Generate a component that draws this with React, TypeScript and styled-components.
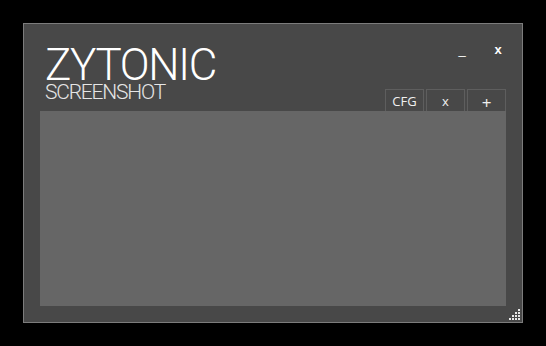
import styled, { createGlobalStyle } from 'styled-components'

const GlobalStyle = createGlobalStyle`
  html, body {
    margin: 0;
    padding: 0;
    background: #000;
  }
  body {
    font-family: Roboto, "Liberation Sans", sans-serif;
  }
`

export default function App() {
  return (
    <>
      <GlobalStyle />
      <Page>
        <Window>
          <Header>
            <Title>
              <AppName>ZYTONIC</AppName>
              <SubName>SCREENSHOT</SubName>
            </Title>
            <RightSide>
              <WindowControls>
                <ControlButton>_</ControlButton>
                <ControlButton bold>x</ControlButton>
              </WindowControls>
              <Toolbar>
                <ToolButton>CFG</ToolButton>
                <ToolButton>x</ToolButton>
                <ToolButton big>+</ToolButton>
              </Toolbar>
            </RightSide>
          </Header>
          <Canvas />
          <Grip>
            <svg width="11" height="11" viewBox="0 0 11 11">
              {[
                [9, 0],
                [6, 3], [9, 3],
                [3, 6], [6, 6], [9, 6],
                [0, 9], [3, 9], [6, 9], [9, 9],
              ].map(([x, y]) => (
                <rect key={`${x}-${y}`} x={x} y={y} width="2" height="2" fill="#e8e8e8" />
              ))}
            </svg>
          </Grip>
        </Window>
      </Page>
    </>
  )
}

const Page = styled.div`
  width: 546px;
  height: 346px;
  padding: 23px;
  box-sizing: border-box;
`

const Window = styled.div`
  position: relative;
  width: 500px;
  height: 300px;
  box-sizing: border-box;
  border: 1px solid #7c7c7c;
  background: #484848;
  padding: 0 16px 16px 16px;
  display: flex;
  flex-direction: column;
`

const Header = styled.div`
  display: flex;
  justify-content: space-between;
  align-items: flex-end;
  height: 87px;
`

const Title = styled.div`
  display: flex;
  flex-direction: column;
  padding-left: 5px;
  color: #fff;
  font-weight: 300;
  margin-bottom: 10px;
`

const AppName = styled.div`
  font-size: 44px;
  line-height: 36px;
  letter-spacing: -1.3px;
`

const SubName = styled.div`
  font-size: 21px;
  line-height: 18px;
  color: #e6e6e6;
  letter-spacing: -1.2px;
`

const RightSide = styled.div`
  display: flex;
  flex-direction: column;
  align-items: flex-end;
  justify-content: space-between;
  height: 100%;
`

const WindowControls = styled.div`
  display: flex;
  gap: 12px;
  margin-top: 19px;
  margin-right: -4px;
`

const ControlButton = styled.div<{ bold?: boolean }>`
  width: 24px;
  height: 20px;
  display: flex;
  justify-content: center;
  color: #fff;
  font-family: "Liberation Sans", sans-serif;
  font-size: 13px;
  font-weight: ${({ bold }) => (bold ? 700 : 400)};
  line-height: 14px;
`

const Toolbar = styled.div`
  display: flex;
  gap: 2px;
  margin-bottom: -1px;
`

const ToolButton = styled.div<{ big?: boolean }>`
  width: 39px;
  height: 23px;
  box-sizing: border-box;
  border: 1px solid #5e5e5e;
  border-bottom: none;
  display: flex;
  align-items: center;
  justify-content: center;
  color: #f0f0f0;
  font-family: "Open Sans", "Liberation Sans", sans-serif;
  font-size: ${({ big }) => (big ? '17px' : '13px')};
  padding-top: ${({ big }) => (big ? '2px' : '0')};
`

const Canvas = styled.div`
  flex: 1;
  background: #666666;
`

const Grip = styled.div`
  position: absolute;
  right: 2px;
  bottom: 2px;
  width: 11px;
  height: 11px;
  display: flex;
`
